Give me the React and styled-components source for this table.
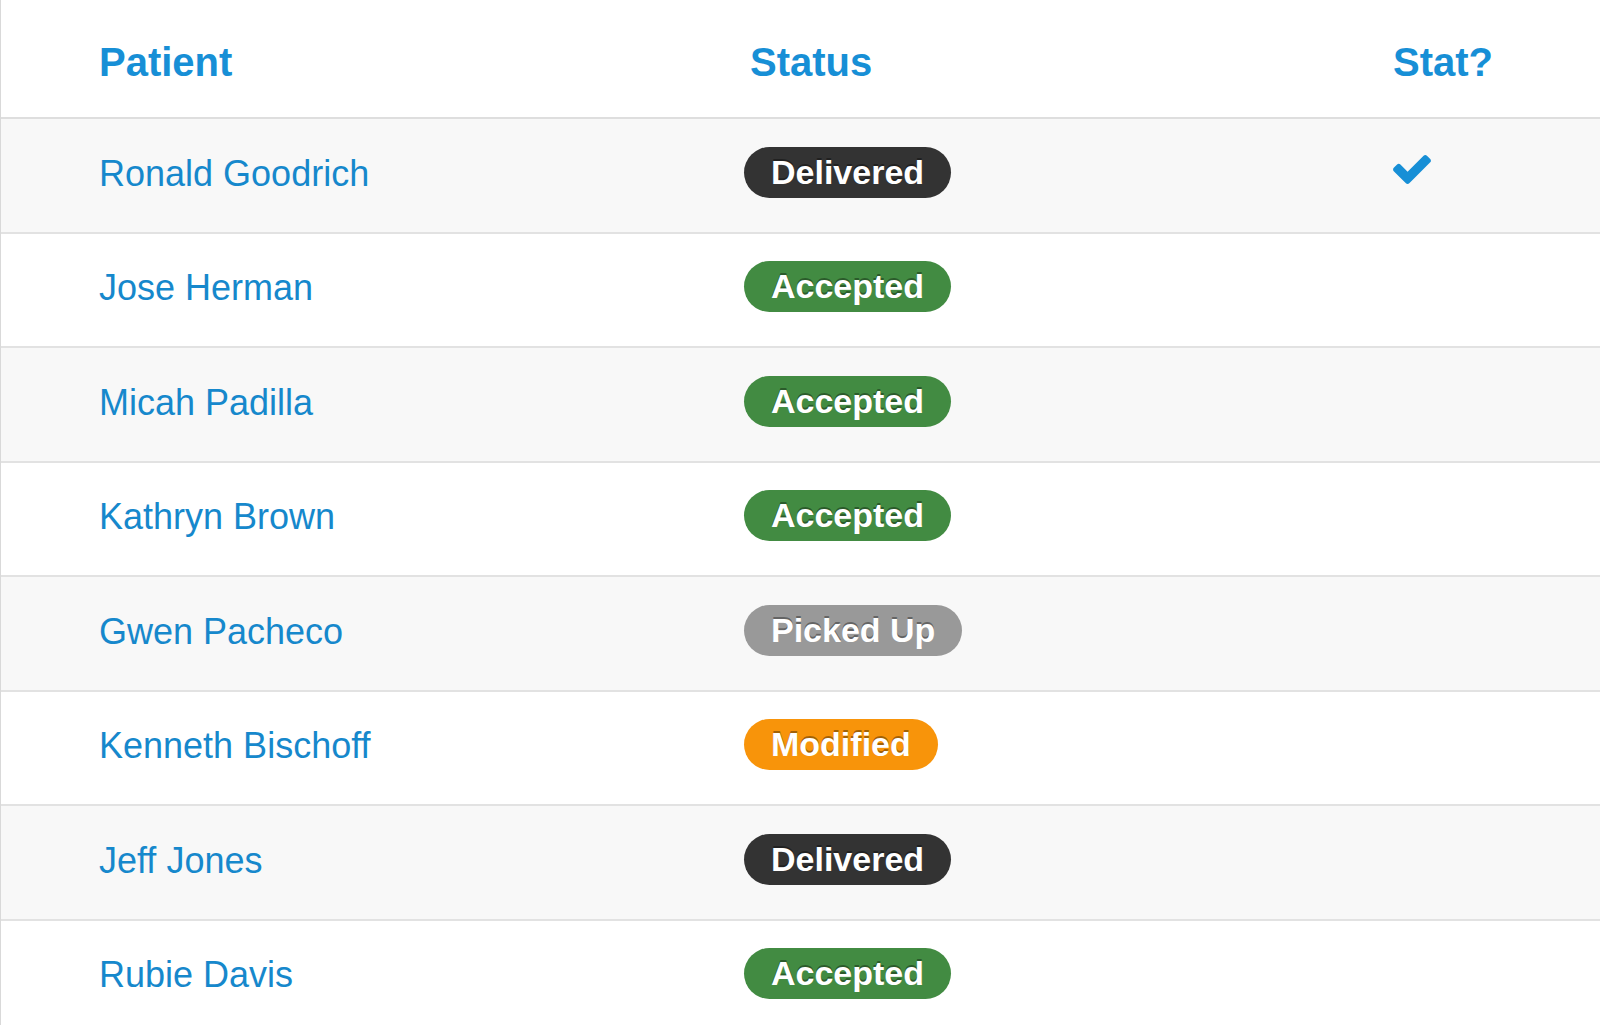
import styled, { createGlobalStyle } from "styled-components";

const GlobalStyle = createGlobalStyle`
  html, body {
    margin: 0;
    padding: 0;
    background: #fff;
    font-family: "Liberation Sans", Arial, sans-serif;
  }
`;

const patients = [
  { name: "Ronald Goodrich", status: "delivered", stat: true },
  { name: "Jose Herman", status: "accepted" },
  { name: "Micah Padilla", status: "accepted" },
  { name: "Kathryn Brown", status: "accepted" },
  { name: "Gwen Pacheco", status: "picked" },
  { name: "Kenneth Bischoff", status: "modified" },
  { name: "Jeff Jones", status: "delivered" },
  { name: "Rubie Davis", status: "accepted" },
];

const labels = {
  delivered: { text: "Delivered", color: "#333333" },
  accepted: { text: "Accepted", color: "#428b42" },
  picked: { text: "Picked Up", color: "#999999" },
  modified: { text: "Modified", color: "#f8940a" },
};

const Table = styled.div`
  width: 1600px;
  height: 1025px;
  overflow: hidden;
  border-left: 1px solid #d9d9d9;
  box-sizing: border-box;
`;

const HeadRow = styled.div`
  display: grid;
  grid-template-columns: 645px 649px 1fr;
  align-items: center;
  height: 119px;
  padding: 8px 0 0 98px;
  box-sizing: border-box;
  border-bottom: 2px solid #dedede;
`;

const HeadCell = styled.div`
  font-size: 40px;
  font-weight: bold;
  color: #178fd6;
  padding-left: ${(p) => p.$indent || 0}px;
`;

const Row = styled.div`
  display: grid;
  grid-template-columns: 645px 649px 1fr;
  align-items: center;
  height: 114.5px;
  padding: 0 0 6px 98px;
  box-sizing: border-box;
  background: ${(p) => (p.$striped ? "#f8f8f8" : "#fff")};
  border-bottom: 2px solid #e2e2e2;
`;

const Name = styled.a`
  font-size: 36px;
  color: #1688cc;
  text-decoration: none;
  margin-top: 3px;
`;

const Label = styled.span`
  justify-self: start;
  display: inline-block;
  height: 51px;
  line-height: 51px;
  padding: 0 27px;
  border-radius: 26px;
  background: ${(p) => p.$color};
  color: #fff;
  font-size: 34px;
  font-weight: bold;
  text-shadow: 0 -2px 0 rgba(0, 0, 0, 0.35);
  white-space: nowrap;
`;

const Check = styled.svg`
  width: 38px;
  height: 29px;
  fill: #178fd6;
  margin-top: -1px;
`;

function CheckIcon() {
  return (
    <Check viewBox="121 334 1550 1188">
      <path d="M1671 566q0 40-28 68l-724 724-136 136q-28 28-68 28t-68-28l-136-136-362-362q-28-28-28-68t28-68l136-136q28-28 68-28t68 28l294 295 656-657q28-28 68-28t68 28l136 136q28 28 28 68z" />
    </Check>
  );
}

export default function App() {
  return (
    <>
      <GlobalStyle />
      <Table>
        <HeadRow>
          <HeadCell>Patient</HeadCell>
          <HeadCell $indent={6}>Status</HeadCell>
          <HeadCell>Stat?</HeadCell>
        </HeadRow>
        {patients.map((p, i) => (
          <Row key={p.name} $striped={i % 2 === 0}>
            <Name href="#">{p.name}</Name>
            <Label $color={labels[p.status].color}>
              {labels[p.status].text}
            </Label>
            <div>{p.stat && <CheckIcon />}</div>
          </Row>
        ))}
      </Table>
    </>
  );
}
